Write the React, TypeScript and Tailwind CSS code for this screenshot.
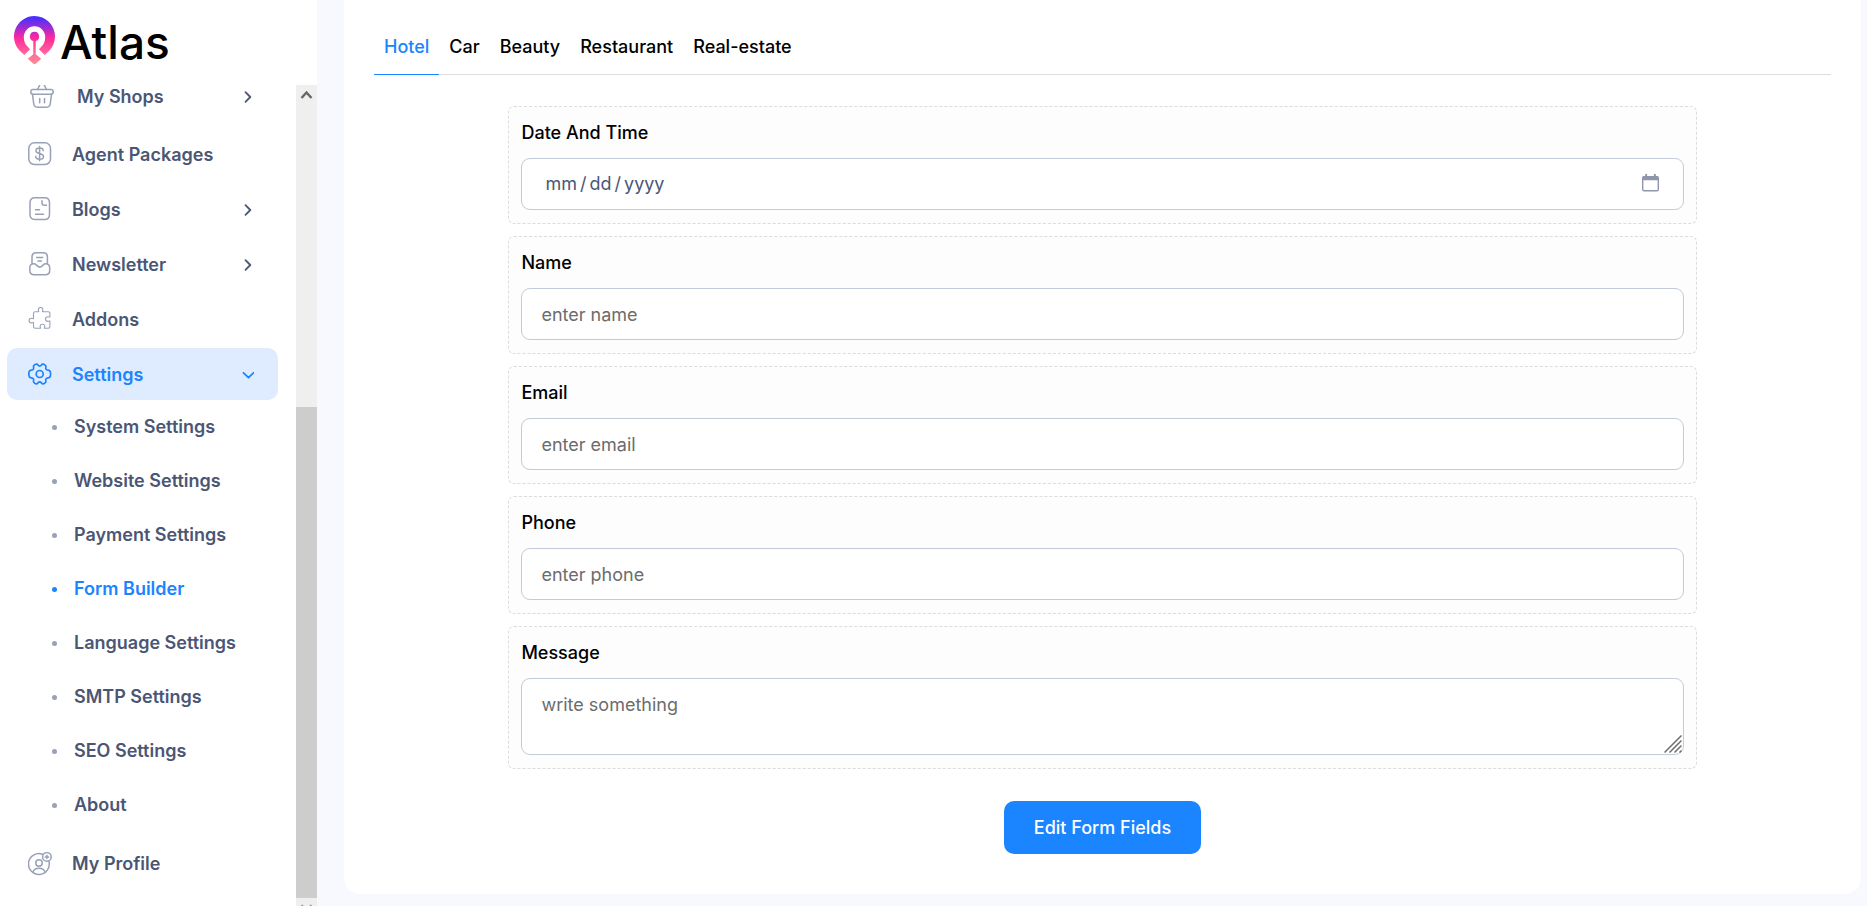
import React, { useState } from "react";
import clsx from "clsx";

const svgProps = {
	fill: "none",
	stroke: "currentColor",
	strokeWidth: 1.5,
	strokeLinecap: "round" as const,
	strokeLinejoin: "round" as const,
	"aria-hidden": true,
	className: "size-6 shrink-0",
	viewBox: "0 0 24 24",
};

const BasketIcon = () => (
	<svg {...svgProps}>
		<path d="M7.5 5.5 10 .5M16.500 5.500 14 .5" />
		<rect x="0.800" y="5.500" width="22.400" height="4.700" rx="2.200" />
		<path d="M2.500 10.300 3.700 19.500c.3 2.300 1.200 3.700 3.700 3.700h9.300c2.500 0 3.300-1.400 3.600-3.700l1.200-9.200M9.700 14.500v4.200M14.500 14.500v4.200" />
	</svg>
);

const DollarIcon = () => (
	<svg {...svgProps}>
		<rect x="0.800" y="0.800" width="21.700" height="21.700" rx="5.500" />
		<path d="M15.200 8.700c0-1.700-1.400-2.700-3.600-2.700S8 7 8 8.700c0 3.800 7.500 1.900 7.500 5.700 0 1.700-1.600 2.800-3.900 2.800S7.700 16.100 7.700 14.300M11.600 4.500v14.200" />
	</svg>
);

const BlogIcon = () => (
	<svg {...svgProps}>
		<path d="M7 .8h9.500c3.300 0 5 1.700 5 5v11.700c0 3.300-1.700 5-5 5H7c-3.300 0-5-1.700-5-5V5.800c0-3.300 1.700-5 5-5Z" />
		<path d="M14 3.700v2.200c0 1.500.9 2.300 2.300 2.300h2.200M7.500 12.800h4M7.500 17.200h8" />
	</svg>
);

const NewsletterIcon = () => (
	<svg {...svgProps}>
		<path d="M4 11.500V5c0-3 1.200-4.200 4.200-4.200h7c3 0 4.200 1.200 4.200 4.200v6.500" />
		<path d="M8.700 5.600h6M10 9h3.400" />
		<path d="M6 11.700c-2.800 0-4.200 1.300-4.200 4.200v2.300c0 3 1.500 4.500 4.500 4.500h10.900c3 0 4.500-1.500 4.500-4.500v-2.300c0-2.900-1.400-4.200-4.200-4.200-1.200 0-1.700.5-2.300 1.200l-1 1c-1.500 1.500-3.400 1.500-4.900 0l-1-1c-.6-.7-1.100-1.200-2.300-1.200Z" />
	</svg>
);

const AddonIcon = () => (
	<svg {...svgProps} strokeWidth={1.1}>
		<path d="M5.500 8V6.500c0-1.200.6-1.700 1.700-1.700h3.100c.3 0 .5-.2.4-.5-.2-.5-.4-1-.4-1.500a2.300 2.300 0 0 1 4.600 0c0 .5-.2 1-.4 1.500-.1.300.1.500.4.500h5.300c1.200 0 1.700.6 1.700 1.700v3.200c0 .4-.2.500-.5.400-.5-.3-1-.4-1.600-.4a2.300 2.300 0 0 0 0 4.700c.6 0 1.100-.2 1.600-.4.300-.2.500 0 .5.300v5.200c0 1.100-.5 1.700-1.700 1.700h-3.400c-.4 0-.5-.2-.4-.5.300-.5.400-1 .4-1.500a2.400 2.400 0 0 0-4.700 0c0 .5.200 1 .4 1.500.2.300 0 .5-.3.500h-5c-1.100 0-1.700-.6-1.700-1.700v-3.700c0-.4-.2-.5-.5-.3-.5.300-1 .4-1.600.4a2.300 2.300 0 0 1 0-4.600c.6 0 1.100.2 1.600.4.300.1.500 0 .5-.4Z" />
	</svg>
);

const GearIcon = () => (
	<svg {...svgProps} strokeWidth={1.700}>
		<circle cx="11.700" cy="12" r="3.500" />
		<path d="M8.900 2.200c1 .2 1.200 1.900 2.800 1.900s1.800-1.700 2.800-1.900c.9-.2 2.600.8 3.200 1.500.7.900-.5 2.100.3 3.400.9 1.400 2.500.7 3.400 1.400.9.600 1.200 2.300 1.200 3.500s-.3 2.900-1.200 3.500c-.9.700-2.500 0-3.400 1.400-.8 1.300.4 2.500-.3 3.400-.6.700-2.300 1.700-3.200 1.500-1-.2-1.200-1.900-2.800-1.900s-1.800 1.700-2.800 1.900c-.9.200-2.600-.8-3.200-1.500-.7-.9.500-2.100-.3-3.400-.9-1.400-2.500-.7-3.400-1.400C1.100 14.900.8 13.200.8 12s.3-2.900 1.200-3.500c.9-.7 2.500 0 3.400-1.400.8-1.300-.4-2.500.3-3.400.6-.7 2.300-1.700 3.200-1.500Z" />
	</svg>
);

const ProfileIcon = () => (
	<svg {...svgProps}>
		<path d="M14.500 2.300A10.400 10.400 0 1 0 20.900 9.300" />
		<circle cx="11" cy="11" r="3.200" />
		<path d="M4.800 20.500c.7-2.600 3.100-4.300 6.200-4.300s5.500 1.700 6.200 4.300" />
		<circle cx="18.900" cy="4.900" r="4.300" />
		<path d="M18.900 3.200v3.400M17.200 4.900h3.400" />
	</svg>
);

const Chevron = ({ open }: { open?: boolean }) => (
	<svg
		aria-hidden="true"
		viewBox="0 0 12 12"
		className="size-3 shrink-0"
		fill="none"
		stroke="currentColor"
		strokeWidth="1.800"
		strokeLinecap="round"
		strokeLinejoin="round"
	>
		{open ? <path d="M1.500 3.800 6.500 8.600 11.500 3.800" /> : <path d="M3.500 1.200 8.300 6 3.500 10.800" />}
	</svg>
);

const Logo = () => (
	<a href="#" className="flex items-start gap-[5px] text-black">
		<svg viewBox="0 0 41 48" className="h-12 w-[41px]" aria-hidden="true">
			<defs>
				<linearGradient id="pin" x1="0" y1="0" x2="0" y2="48" gradientUnits="userSpaceOnUse">
					<stop offset="0.04" stopColor="#4a2fff" />
					<stop offset="0.250" stopColor="#a22bd0" />
					<stop offset="0.460" stopColor="#ff2a9d" />
					<stop offset="1" stopColor="#ff8f96" />
				</linearGradient>
			</defs>
			<path
				fill="url(#pin)"
				d="M20.500 0A20.500 20.500 0 0 1 41 20.500c0 5.500-2.200 10.500-5.700 14.200L30.700 39 24.900 33.200l2.600-2.700c2.300-2 3.700-5.400 3.700-9.500a10.700 10.700 0 0 0-21.400 0c0 4.100 1.400 7.500 3.700 9.500l2.600 2.700L10.300 39 5.700 34.700A20.500 20.500 0 0 1 20.500 0Z"
			/>
			<path fill="url(#pin)" d="M20.500 15.700a4.800 4.800 0 0 1 1.200 9.400v13.100l5.500 4.600-5.200 4.600c-1 .8-2 .8-3 0l-5.200-4.600 5.500-4.600V25.100a4.800 4.800 0 0 1 1.200-9.400Z" />
		</svg>
		<span className="text-[46px] leading-[52px] font-medium">Atlas</span>
	</a>
);

const CalendarIcon = () => (
	<svg viewBox="0 0 17 18" className="pointer-events-none absolute top-4 right-[25px] h-[18px] w-[17px] text-[#8e96ad]" aria-hidden="true">
		<rect x="0.700" y="2.700" width="15.600" height="14" rx="1.300" fill="none" stroke="currentColor" strokeWidth="1.400" />
		<path fill="currentColor" d="M1 2h15v4.200H1ZM3.200 0h1.900v3H3.200ZM11.900 0h1.900v3h-1.900Z" />
	</svg>
);

const menu = [
	{ name: "Agent Packages", icon: DollarIcon },
	{ name: "Blogs", icon: BlogIcon, nested: true },
	{ name: "Newsletter", icon: NewsletterIcon, nested: true },
	{ name: "Addons", icon: AddonIcon },
	{ name: "Settings", icon: GearIcon, nested: true, active: true },
];

const settings = [
	"System Settings",
	"Website Settings",
	"Payment Settings",
	"Form Builder",
	"Language Settings",
	"SMTP Settings",
	"SEO Settings",
	"About",
];

const Sidebar: React.FC = () => {
	return (
		<aside className="flex h-full w-[317px] shrink-0 flex-col bg-white">
			<div className="flex h-[85px] shrink-0 items-start px-3.5 pt-4">
				<Logo />
			</div>
			<div className="flex min-h-0 flex-1">
				<nav className="-mt-[15px] flex min-w-0 flex-1 flex-col overflow-hidden pr-[18px] pl-[7px] text-lg font-semibold text-[#4b5675] [clip-path:inset(15px_0_0_0)]">
					<a href="#" className="mb-1.5 flex h-[52px] shrink-0 items-center gap-[23px] pr-6 pl-[23px]">
						<span className="text-[#99a1b7]">
							<BasketIcon />
						</span>
						<span className="flex flex-1 items-center justify-between pt-0.5">
							My Shops
							<Chevron />
						</span>
					</a>
					{menu.map(({ name, icon: Icon, nested, active }) => (
						<a
							key={name}
							href="#"
							className={clsx(
								"flex h-[52px] shrink-0 items-center gap-5 rounded-[10px] pr-6 pl-[21px]",
								active ? "bg-[#dfebff] text-[#1b84ff]" : "mb-[3px]"
							)}
						>
							<span className={active ? "text-[#1b84ff]" : "text-[#99a1b7]"}>
								<Icon />
							</span>
							<span className="flex flex-1 items-center justify-between pt-0.5">
								{name}
								{nested && <Chevron open={active} />}
							</span>
						</a>
					))}
					<ul className="mb-1.5">
						{settings.map((name) => (
							<li key={name}>
								<a
									href="#"
									className={clsx(
										"flex h-[54px] items-center gap-[17px] pl-[45px]",
										name === "Form Builder" && "text-[#1b84ff]"
									)}
								>
									<span
										className={clsx(
											"size-[5px] rounded-full",
											name === "Form Builder" ? "bg-[#1b84ff]" : "bg-[#99a1b7]"
										)}
									/>
									{name}
								</a>
							</li>
						))}
					</ul>
					<a href="#" className="flex h-[52px] shrink-0 items-center gap-5 pl-[21px]">
						<span className="text-[#99a1b7]">
							<ProfileIcon />
						</span>
						My Profile
					</a>
				</nav>
				{/* scrollbar */}
				<div className="flex w-[21px] shrink-0 flex-col overflow-hidden bg-[#efefef] text-[#686868]">
					<svg viewBox="0 0 21 21" className="size-[21px] shrink-0" fill="none" stroke="currentColor" strokeWidth="2.500" aria-hidden="true">
						<path d="M5.500 13 10.500 7.500 15.500 13" />
					</svg>
					<div className="flex-[301]" />
					<div className="flex-[491] bg-[#cdcdcd]" />
					<svg viewBox="0 0 21 8" className="h-2 w-[21px] shrink-0" fill="none" stroke="#a3a3a3" strokeWidth="2" aria-hidden="true">
						<path d="M5.500 7 10.500 12.500 15.500 7" />
					</svg>
				</div>
			</div>
		</aside>
	);
};

const tabs = ["Hotel", "Car", "Beauty", "Restaurant", "Real-estate"];

const fieldClass =
	"block w-full rounded-[9px] border border-[#c4cada] bg-white text-lg text-[#4b5675] outline-none placeholder:text-[#6c6c6c]";

const Field = ({ id, label, children }: { id: string; label: string; children: React.ReactNode }) => (
	<div className="rounded-md border border-dashed border-[#dcdcdc] bg-[#fdfdfd] p-3 pb-[13px]">
		<label htmlFor={id} className="mb-3 block text-lg leading-[27px] font-medium text-black">
			{label}
		</label>
		{children}
	</div>
);

const App: React.FC = () => {
	const [tab, setTab] = useState("Hotel");

	return (
		<div className="flex h-screen overflow-hidden bg-[#f8f9ff] font-['Inter',sans-serif]">
			<Sidebar />
			<main className="min-w-0 flex-1 overflow-hidden pr-1.5 pb-3 pl-[27px]">
				<div className="h-full rounded-b-2xl bg-white px-[30px]">
					<div role="tablist" className="flex border-b border-[#dddddd] pt-5">
						{tabs.map((name) => (
							<button
								key={name}
								role="tab"
								aria-selected={tab === name}
								onClick={() => setTab(name)}
								className={clsx(
									"-mb-px h-[55px] border-b px-2.5 text-lg font-medium",
									tab === name ? "border-[#1b84ff] text-[#1b84ff]" : "border-transparent text-black"
								)}
							>
								{name}
							</button>
						))}
					</div>
					<form className="mx-auto flex w-10/12 flex-col gap-3 px-[13px] pt-[31px]" onSubmit={(e) => e.preventDefault()}>
						<Field id="date" label="Date And Time">
							<div className="relative">
								<input
									id="date"
									type="date"
									className={clsx(
										fieldClass,
										"h-[52px] px-[22px] [&::-webkit-calendar-picker-indicator]:opacity-0 [&::-webkit-datetime-edit-text]:px-0.5"
									)}
								/>
								<CalendarIcon />
							</div>
						</Field>
						<Field id="name" label="Name">
							<input id="name" type="text" placeholder="enter name" className={clsx(fieldClass, "h-[52px] px-[19px]")} />
						</Field>
						<Field id="email" label="Email">
							<input id="email" type="email" placeholder="enter email" className={clsx(fieldClass, "h-[52px] px-[19px]")} />
						</Field>
						<Field id="phone" label="Phone">
							<input id="phone" type="tel" placeholder="enter phone" className={clsx(fieldClass, "h-[52px] px-[19px]")} />
						</Field>
						<Field id="message" label="Message">
							<div className="relative">
								<textarea
									id="message"
									placeholder="write something"
									className={clsx(fieldClass, "h-[77px] resize-none px-[19px] py-3 leading-[27px]")}
								/>
								<svg
									viewBox="0 0 18 18"
									className="pointer-events-none absolute right-0.5 bottom-0.5 size-[18px]"
									fill="none"
									stroke="#6e6e6e"
									strokeWidth="1.500"
									aria-hidden="true"
								>
									<path d="M.5 17.500 17.500.5M5.500 17.500 17.500 5.500M10.500 17.500 17.500 10.500M15.500 17.500 17.500 15.500" />
								</svg>
							</div>
						</Field>
						<button
							type="submit"
							className="mt-5 h-[53px] self-center rounded-[10px] bg-[#1b84ff] px-[30px] text-lg font-medium text-white"
						>
							Edit Form Fields
						</button>
					</form>
				</div>
			</main>
		</div>
	);
};

export default App;
